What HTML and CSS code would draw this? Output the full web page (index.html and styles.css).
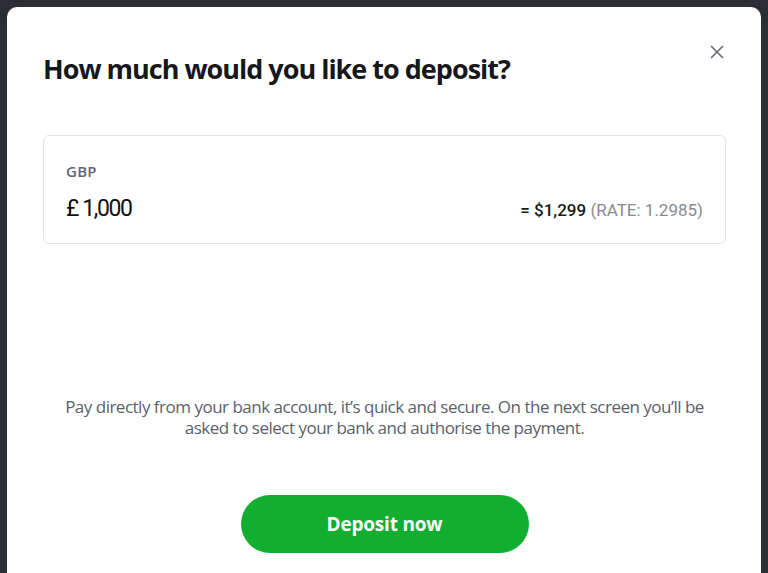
FILE: index.html
```html
<!DOCTYPE html>
<html lang="en">
<head>
<meta charset="utf-8">
<link rel="stylesheet" href="styles.css">
</head>
<body>
<div class="modal">
  <button class="close" aria-label="Close">
    <svg width="14" height="14" viewBox="0 0 14 14"><path d="M1.5 1.5L12.5 12.5M12.5 1.5L1.5 12.5" stroke="#6b6e75" stroke-width="1.7" stroke-linecap="round"/></svg>
  </button>
  <h1 class="title">How much would you like to deposit?</h1>
  <div class="card">
    <div class="currency">GBP</div>
    <div class="row">
      <div class="amount">£ 1,000</div>
      <div class="conv"><span class="usd">= $1,299</span> <span class="rate">(RATE: 1.2985)</span></div>
    </div>
  </div>
  <p class="note">Pay directly from your bank account, it’s quick and secure. On the next screen you’ll be asked to select your bank and authorise the payment.</p>
  <div class="actions">
    <button class="deposit">Deposit now</button>
  </div>
</div>
</body>
</html>
```
FILE: styles.css
```css
html, body {
  margin: 0;
  height: 100%;
  overflow: hidden;
}
body {
  background: #2b2e35;
  font-family: "Open Sans", "Liberation Sans", sans-serif;
}
.modal {
  position: relative;
  margin: 7px 7px 0 7px;
  background: #fff;
  border-radius: 10px;
  padding: 44px 35px 0 36px;
  height: 620px;
  box-sizing: border-box;
}
.close {
  position: absolute;
  top: 31px;
  right: 30px;
  width: 28px;
  height: 28px;
  border: 0;
  background: none;
  padding: 0;
  display: flex;
  align-items: center;
  justify-content: center;
}
.title {
  margin: 0;
  font-size: 27px;
  line-height: 36px;
  font-weight: 700;
  color: #17171c;
  letter-spacing: -1px;
}
.card {
  margin-top: 48px;
  border: 1px solid #e3e4e6;
  border-radius: 6px;
  padding: 25px 22px 22px 22px;
}
.currency {
  font-size: 15px;
  font-weight: 600;
  color: #626778;
  line-height: 20px;
  letter-spacing: 0.3px;
}
.row {
  margin-top: 16px;
  display: flex;
  justify-content: space-between;
  align-items: baseline;
  font-family: Roboto, "Liberation Sans", sans-serif;
}
.amount {
  font-size: 23px;
  color: #111;
  line-height: 24px;
  letter-spacing: -1.4px;
}
.conv {
  font-size: 17px;
  letter-spacing: 0;
}
.usd {
  font-weight: 500;
  color: #1a1a1a;
}
.rate {
  color: #8a8b8f;
}
.note {
  margin: 152px 0 0 0;
  padding: 0 18px;
  text-align: center;
  font-size: 17px;
  line-height: 21px;
  color: #5b5f6a;
  letter-spacing: -0.5px;
}
.actions {
  display: flex;
  justify-content: center;
  margin-top: 57px;
}
.deposit {
  width: 288px;
  height: 58px;
  border: 0;
  border-radius: 29px;
  background: #12ae30;
  color: #fff;
  font-family: "Open Sans", "Liberation Sans", sans-serif;
  font-weight: 700;
  font-size: 19px;
  letter-spacing: -0.2px;
}
```
